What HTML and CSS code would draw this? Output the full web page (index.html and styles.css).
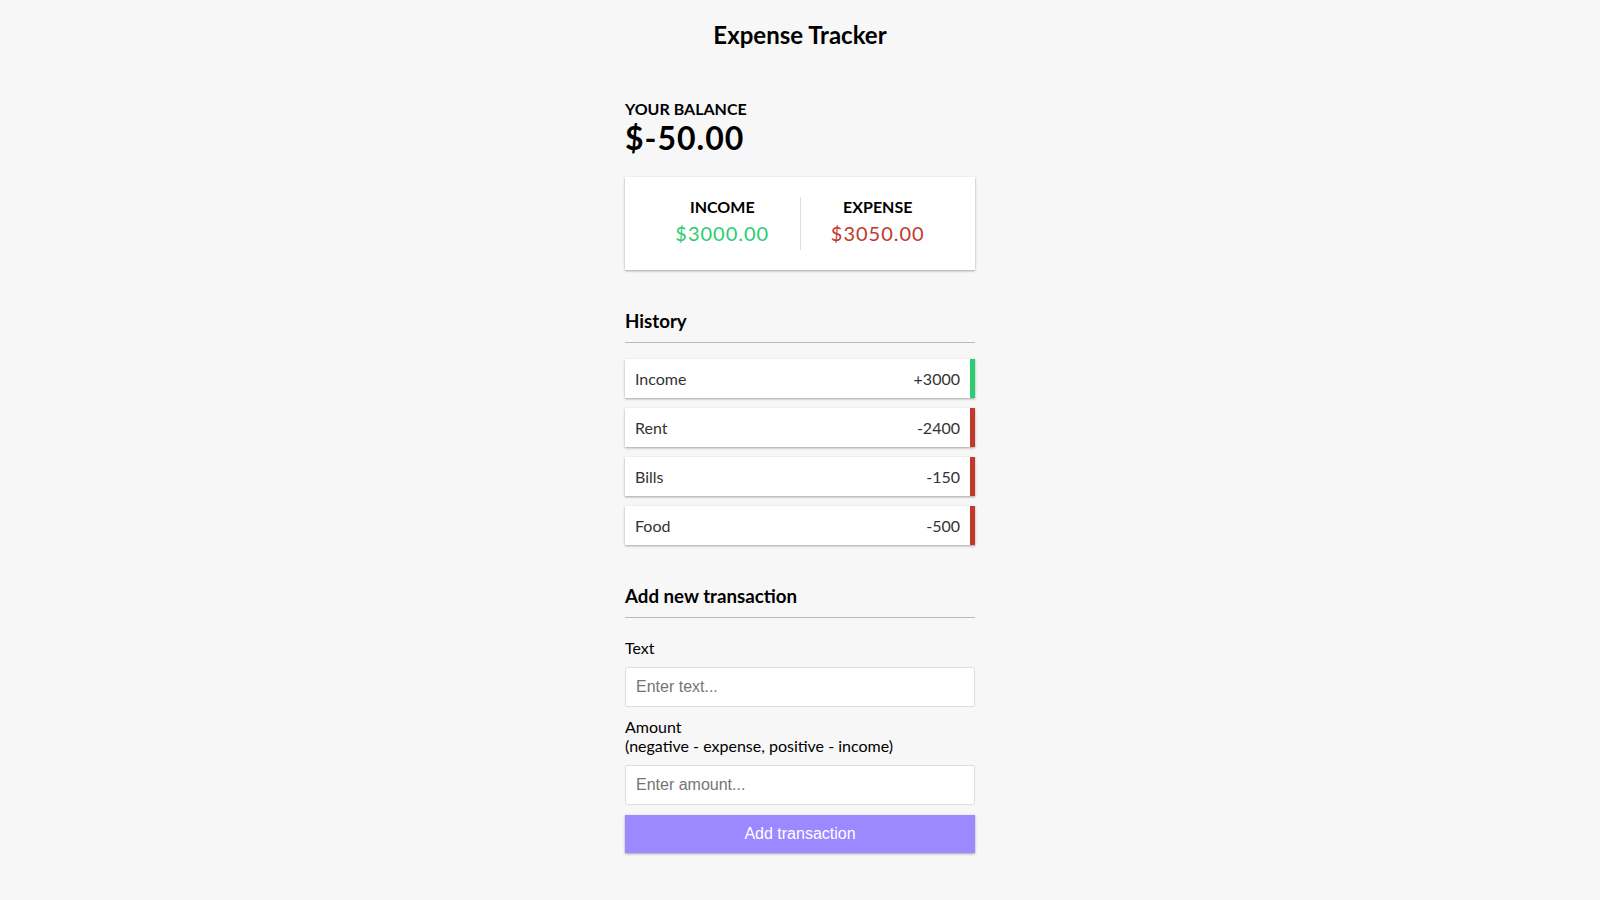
FILE: index.html
```html
<!DOCTYPE html>
<html lang="en">
<head>
<meta charset="UTF-8">
<title>Expense Tracker</title>
<link rel="stylesheet" href="styles.css">
</head>
<body>
  <h2>Expense Tracker</h2>
  <div class="container">
    <h4>Your Balance</h4>
    <h1>$-50.00</h1>

    <div class="inc-exp-container">
      <div>
        <h4>Income</h4>
        <p class="money plus">$3000.00</p>
      </div>
      <div>
        <h4>Expense</h4>
        <p class="money minus">$3050.00</p>
      </div>
    </div>

    <h3>History</h3>
    <ul class="list">
      <li class="plus">Income <span>+3000</span></li>
      <li class="minus">Rent <span>-2400</span></li>
      <li class="minus">Bills <span>-150</span></li>
      <li class="minus">Food <span>-500</span></li>
    </ul>

    <h3>Add new transaction</h3>
    <form>
      <div class="form-control">
        <label for="text">Text</label>
        <input type="text" id="text" placeholder="Enter text...">
      </div>
      <div class="form-control">
        <label for="amount">Amount <br>(negative - expense, positive - income)</label>
        <input type="number" id="amount" placeholder="Enter amount...">
      </div>
      <button type="button" class="btn">Add transaction</button>
    </form>
  </div>
</body>
</html>
```

FILE: styles.css
```css
* {
  box-sizing: border-box;
}

body {
  background-color: #f7f7f7;
  display: flex;
  flex-direction: column;
  align-items: center;
  justify-content: center;
  min-height: 100vh;
  margin: 0;
  font-family: Lato, "Liberation Sans", sans-serif;
}

h2 {
  margin: 0.83em 0;
  font-size: 24px;
}

.container {
  margin: 30px auto;
  width: 350px;
}

h1 {
  letter-spacing: 1px;
  margin: 0;
  font-size: 32px;
}

h3 {
  border-bottom: 1px solid #bbb;
  padding-bottom: 10px;
  margin: 40px 0 10px;
  font-size: 18.72px;
}

h4 {
  margin: 0;
  text-transform: uppercase;
  font-size: 16px;
}

.inc-exp-container {
  background-color: #fff;
  box-shadow: 0 1px 3px rgba(0, 0, 0, 0.12), 0 1px 2px rgba(0, 0, 0, 0.24);
  padding: 20px;
  display: flex;
  justify-content: space-between;
  margin: 20px 0;
}

.inc-exp-container > div {
  flex: 1;
  text-align: center;
}

.inc-exp-container > div:first-of-type {
  border-right: 1px solid #dedede;
}

.money {
  font-size: 20px;
  letter-spacing: 1px;
  margin: 5px 0;
}

.money.plus {
  color: #2ecc71;
}

.money.minus {
  color: #c0392b;
}

label {
  display: inline-block;
  margin: 10px 0;
}

.form-control input {
  border: 1px solid #dedede;
  border-radius: 2px;
  display: block;
  font-family: "Liberation Sans", Arial, sans-serif;
  font-size: 16px;
  padding: 10px;
  width: 100%;
  background: #fff;
}

.form-control input::placeholder {
  color: #757575;
}

.btn {
  cursor: pointer;
  background-color: #9c88ff;
  box-shadow: 0 1px 3px rgba(0, 0, 0, 0.12), 0 1px 2px rgba(0, 0, 0, 0.24);
  color: #fff;
  border: 0;
  display: block;
  font-family: "Liberation Sans", Arial, sans-serif;
  font-size: 16px;
  margin: 10px 0 30px;
  padding: 10px;
  width: 100%;
}

.list {
  list-style-type: none;
  padding: 0;
  margin: 16px 0 40px;
}

.list li {
  background-color: #fff;
  box-shadow: 0 1px 3px rgba(0, 0, 0, 0.12), 0 1px 2px rgba(0, 0, 0, 0.24);
  color: #333;
  display: flex;
  justify-content: space-between;
  padding: 10px;
  margin: 10px 0;
}

.list li.plus {
  border-right: 5px solid #2ecc71;
}

.list li.minus {
  border-right: 5px solid #c0392b;
}
```
